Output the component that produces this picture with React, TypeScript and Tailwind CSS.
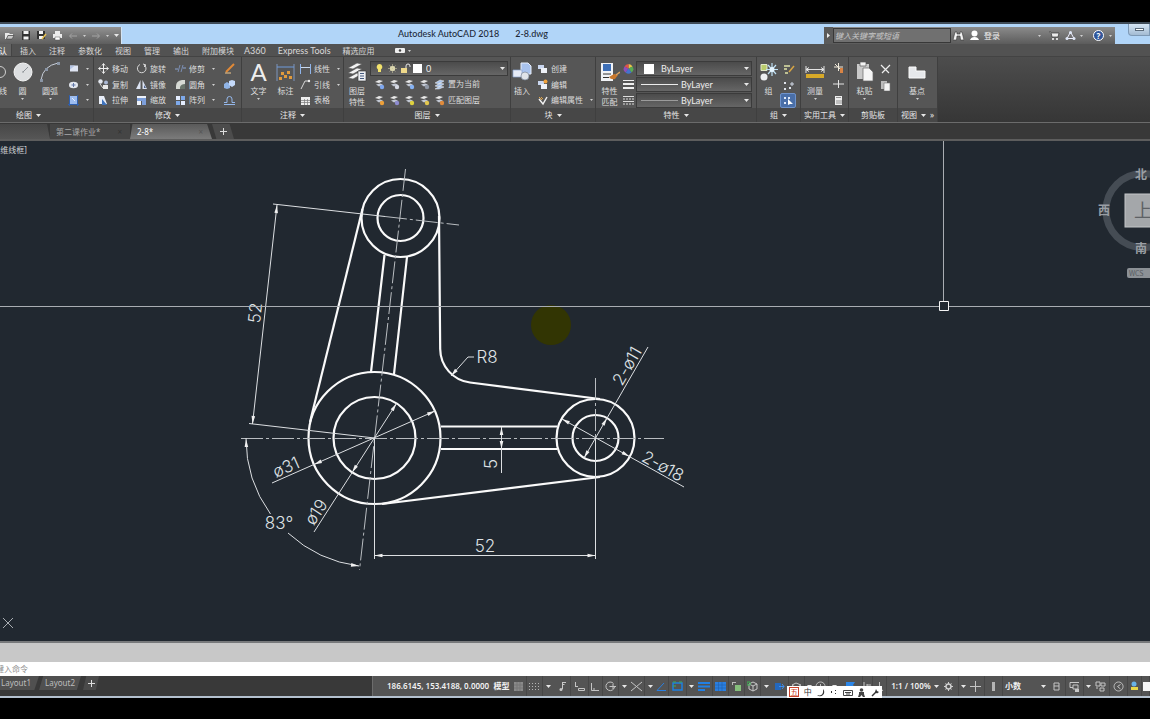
import React from 'react';
import clsx from 'clsx';

type Kids = { children?: React.ReactNode };

function Ico({ w = 11, h = 11, children }: Kids & { w?: number; h?: number }) {
  return (
    <svg width={w} height={h} viewBox={`0 0 ${w} ${h}`} fill="none" className="shrink-0" aria-hidden="true">
      {children}
    </svg>
  );
}

const Caret = () => (
  <Ico w={5} h={3}>
    <path d="M0 0h5L2.5 3z" fill="#e8e8e8" />
  </Ico>
);

const SmallCaret = () => (
  <Ico w={3} h={2}>
    <path d="M0 0h3L1.5 2z" fill="#d0d0d0" />
  </Ico>
);

// ---------- ribbon building blocks ----------

function Panel({ title, width, caret = true, extra, children }: Kids & {
  title: string;
  width: string;
  caret?: boolean;
  extra?: React.ReactNode;
}) {
  return (
    <section className={clsx('flex shrink-0 flex-col border-r border-[#3f3f3f] bg-[#565656]', width)}>
      <div className="flex h-[51px] pt-1">{children}</div>
      <div className="flex h-[14px] items-center justify-center gap-1 bg-[#474747] text-[#e6e6e6]">
        <span className="whitespace-nowrap">{title}</span>
        {caret && <Caret />}
        {extra}
      </div>
    </section>
  );
}

function Big({ icon, label, width, caret = false }: {
  icon: React.ReactNode;
  label: string;
  width: string;
  caret?: boolean;
}) {
  return (
    <button className={clsx('flex shrink-0 flex-col items-center leading-[11px]', width)}>
      <span className="flex h-[24px] items-start justify-center pt-px">{icon}</span>
      {label.split(' ').map((l) => (
        <span key={l} className="whitespace-nowrap">{l}</span>
      ))}
      {caret && <span className="pt-[2px]"><SmallCaret /></span>}
    </button>
  );
}

function Small({ icon, label, title, caret }: {
  icon: React.ReactNode;
  label?: string;
  title?: string;
  caret?: boolean;
}) {
  return (
    <button className="flex h-4 items-center gap-[3px] whitespace-nowrap" aria-label={title}>
      {icon}
      {label}
      {caret && <span className="ml-1"><SmallCaret /></span>}
    </button>
  );
}

const Col = ({ width, children }: Kids & { width: string }) => (
  <div className={clsx('flex shrink-0 flex-col', width)}>{children}</div>
);

// ---------- icons ----------

const RectIco = () => <Ico><path d="M2 2.500h8v6H2z" fill="#dfe5f3" /><path d="M2 2.500h5l-5 4z" fill="#b3c3e2" /></Ico>;
const EllipseIco = () => <Ico><ellipse cx="5.500" cy="6" rx="4.500" ry="3.200" fill="#e4e8f0" /><path d="M5.500 4v4M3.500 6h4" stroke="#6279a8" /></Ico>;
const HatchIco = () => <Ico><path d="M2 1h7v8H2z" fill="#9cbcf0" /><path d="M1.500 0v11M0 9.500h11M9.500 0v11" stroke="#2f5fae" /><path d="M4 3l3 3" stroke="#e6efff" /></Ico>;
const MoveIco = () => <Ico><path d="M5.500 1v9M1 5.500h9M4 2.500l1.500-2 1.500 2M4 8.500l1.500 2 1.500-2M2.500 4l-2 1.500 2 1.500M8.500 4l2 1.500-2 1.500" stroke="#eee" /></Ico>;
const CopyIco = () => <Ico><circle cx="2.500" cy="2.500" r="2.200" fill="#e4e8f0" /><circle cx="8" cy="3.500" r="2" fill="#aab8d4" /><path d="M5 6h5v4H5z" fill="#e8e8e8" /><path d="M2 5l3 4" stroke="#ddd" /></Ico>;
const StretchIco = () => <Ico><path d="M1 1h5l3 8H1z" fill="#e9eef8" /><path d="M4 4l5 6H4z" fill="#3e73bd" /></Ico>;
const RotateIco = () => <Ico><path d="M4 1.500a4.300 4.300 0 1 0 4 .3M7 1l3 1-2 2" stroke="#d7d7d7" /></Ico>;
const MirrorIco = () => <Ico><path d="M4.500 1v9H0zM6.500 1v9H11z" fill="#dbe3f3" /><path d="M8 6l2 3H8z" fill="#4a5f8a" /></Ico>;
const ScaleIco = () => <Ico><path d="M1 1h9v9H6V6H1z" fill="#7d9fdb" /><path d="M1 1h9v2H1zM1 6h4v4H1z" fill="#eef2fa" /></Ico>;
const TrimIco = () => <Ico><path d="M0 6h3M8 5h3" stroke="#8ba3cf" /><path d="M3 9l2-7M6 9l2-7" stroke="#7b8fb5" /></Ico>;
const FilletIco = () => <Ico><path d="M1 10V7q0-5 6-6h3v9z" fill="#d6d9d4" /><path d="M5 10V8q1-3 5-3v5z" fill="#69746b" /></Ico>;
const ArrayIco = () => <Ico><path d="M1 1h4v4H1zM6 6h4v4H6z" fill="#e4edff" /><path d="M6 1h4v4H6zM1 6h4v4H1z" fill="#7ea9ea" /></Ico>;
const PencilIco = () => <Ico><path d="M2 9l8-8" stroke="#e28a37" strokeWidth="2" /><path d="M1 10h6" stroke="#f1c88c" /></Ico>;
const ExplodeIco = () => <Ico><path d="M0 5l3-2 3 2v4l-3 1-3-1z" fill="#90b4e6" /><path d="M5 2l3-1 3 1v4l-3 2-3-2z" fill="#c5dafa" /></Ico>;
const OffsetIco = () => <Ico><path d="M0 9.500h11M0 7.500h3V4a2.500 2.500 0 0 1 5 0v3.500h3" stroke="#94b7ea" /></Ico>;
const LinearIco = () => <Ico><path d="M.5 1v10M10.500 1v10" stroke="#8fb4ea" /><path d="M1 4.500h9" stroke="#c9d9ee" /></Ico>;
const LeaderIco = () => <Ico><path d="M1 10l4-8h4" stroke="#d8d8d8" /><circle cx="9" cy="2" r="1.200" fill="#eee" /></Ico>;
const TableIco = () => <Ico><path d="M1 2h9v8H1z" fill="#eee" /><path d="M1 5.500h9M1 7.500h9M4.500 4v6M7.500 4v6" stroke="#7a7a7a" strokeWidth=".7" /></Ico>;

const LayerIco = ({ dot }: { dot: string }) => (
  <Ico>
    <path d="M1 3l4-2 4 1-4 2z" fill="#e8e8e8" />
    <path d="M2 5.500l4-1 3 1-4 2z" fill="#c2c8d4" />
    <circle cx="8" cy="8" r="2.200" fill={dot} />
  </Ico>
);

const StackIco = () => (
  <Ico>
    <path d="M1 4l5-3 4 1-5 3zM1 7l5-3 4 1-5 3zM1 10l5-3 4 1-5 2z" fill="#a8c3ea" stroke="#f0f0f0" strokeWidth=".5" />
  </Ico>
);

const BlockIco = ({ spark }: { spark?: boolean }) => (
  <Ico>
    <path d="M1 2h6v4H1z" fill="#c9d6ef" />
    <path d="M4 5h6v5H4z" fill="#eef1f7" />
    {spark && <circle cx="8.500" cy="2.500" r="2" fill="#f0a23c" />}
  </Ico>
);

const WheelIco = () => (
  <Ico>
    <path d="M5.500 5.500V1a4.500 4.500 0 0 1 4 2.500z" fill="#e8c648" />
    <path d="M5.500 5.500l4-2a4.500 4.500 0 0 1-1 6z" fill="#58a955" />
    <path d="M5.500 5.500l3 4a4.500 4.500 0 0 1-6 0z" fill="#4373cf" />
    <path d="M5.500 5.500l-3 4a4.500 4.500 0 0 1-1-6z" fill="#8d50b8" />
    <path d="M5.500 5.500l-4-2a4.500 4.500 0 0 1 4-2.500z" fill="#e0524a" />
  </Ico>
);

const WeightIco = () => <Ico><path d="M0 1.500h11" stroke="#eee" /><path d="M0 5h11" stroke="#eee" strokeWidth="2" /><path d="M0 9h11" stroke="#eee" strokeWidth="2" /></Ico>;
const LtypeIco = () => <Ico><path d="M0 1.500h11M0 6.500h11" stroke="#ddd" /><path d="M0 4h11M0 9h11" stroke="#ddd" strokeDasharray="2 1" /></Ico>;

// ---------- title bar ----------

function TitleBar() {
  return (
    <header className="flex h-[22px] shrink-0 items-end border-t-2 border-[#3f4b57] bg-[#b1d5f8]">
      <div className="flex h-[17px] w-[122px] items-center overflow-hidden border-r border-[#d4e5f5] bg-gradient-to-b from-[#929292] to-[#5e5e5e] pl-[4px]">
        <div className="flex items-center gap-[5px]">
          <button aria-label="打开"><Ico><path d="M1 3h4l1 1h3v1H4L2 9H1z" fill="#e9e9e9" /><path d="M4 5.500h6L8 9H2.500z" fill="#c8c8c8" stroke="#333" strokeWidth=".5" /></Ico></button>
          <button aria-label="保存"><Ico><path d="M2 1h8v9H2z" fill="#333" /><path d="M3.500 1h5v3h-5zM3.500 6.500h5v3h-5z" fill="#f3f3f3" /></Ico></button>
          <button aria-label="另存为"><Ico><path d="M1 1h8v8H1z" fill="#333" /><path d="M3 1h4v3H3zM3 6h4v3H3z" fill="#f3f3f3" /><path d="M6 9l4-5" stroke="#e8c14f" strokeWidth="1.500" /></Ico></button>
          <button aria-label="打印"><Ico><path d="M3 1h5v3H3zM1 4h9v4H1z" fill="#ececec" /><path d="M3 7h5v3H3z" fill="#fff" stroke="#555" strokeWidth=".5" /></Ico></button>
          <button aria-label="放弃"><Ico w={10}><path d="M9 6H2M4 3.500L1.500 6 4 8.500" stroke="#a4a4a4" /></Ico></button>
          <SmallCaret />
          <button aria-label="重做"><Ico w={10}><path d="M1 6h7M6 3.500L8.500 6 6 8.500" stroke="#a4a4a4" /></Ico></button>
          <SmallCaret />
          <Caret />
        </div>
      </div>
      <h1 className="flex h-[20px] flex-1 items-center justify-center gap-4 font-[Lato] text-[9px] font-medium text-[#1d2a38]">
        <span>Autodesk AutoCAD 2018</span>
        <span>2-8.dwg</span>
      </h1>
      <div className="flex h-[17px] shrink-0 items-center bg-gradient-to-b from-[#8b8b8b] to-[#5c5c5c] text-[#f0f0f0]">
        <button className="flex h-full w-[9px] items-center justify-center bg-[#5b5b5b]" aria-label="展开">
          <Ico w={3} h={5}><path d="M0 0v5l3-2.500z" fill="#eee" /></Ico>
        </button>
        <input
          aria-label="搜索"
          placeholder="键入关键字或短语"
          className="h-[15px] w-[118px] border border-[#383838] bg-[#707070] px-px text-[8px] italic placeholder:text-[#c6c6c6]"
        />
        <div className="flex h-full w-[164px] items-center pl-[2px]">
          <button aria-label="搜索信息"><Ico><path d="M2 2h2v2h3V2h2l2 8H7.500L7 6H4l-.5 4H0z" fill="#f2f2f2" stroke="#333" strokeWidth=".6" /></Ico></button>
          <button className="ml-[5px] flex items-center gap-1">
            <Ico><circle cx="5.500" cy="3.500" r="3" fill="#fff" /><path d="M1 10q1-3 4.500-3t4.500 3z" fill="#fff" /></Ico>
            登录
          </button>
          <span className="ml-[38px]"><SmallCaret /></span>
          <button className="ml-2" aria-label="购物车"><Ico><path d="M0 2h2l1 5h6l1-4H3" fill="#ececec" stroke="#333" strokeWidth=".7" /><circle cx="4" cy="9" r="1" fill="#fff" /><circle cx="8" cy="9" r="1" fill="#fff" /></Ico></button>
          <button className="ml-[5px]" aria-label="A360"><Ico><path d="M5.500 2L9 8.500H2z" stroke="#eef" /><circle cx="5.500" cy="2.500" r="1.500" fill="#dfe6f5" /><circle cx="2" cy="8.500" r="1.500" fill="#dfe6f5" /><circle cx="9" cy="8.500" r="1.500" fill="#dfe6f5" /></Ico></button>
          <span className="ml-1"><SmallCaret /></span>
          <button className="ml-[10px] flex size-[11px] items-center justify-center rounded-full border border-white bg-[#31569a] text-[8px] leading-none font-bold text-white">?</button>
          <span className="ml-[5px]"><SmallCaret /></span>
        </div>
      </div>
      <div className="flex h-[20px] w-[35px] items-start justify-end">
        <button aria-label="最小化" className="flex h-[12px] w-[22px] items-center justify-center rounded-bl-sm border border-t-0 border-[#7e99b5] bg-gradient-to-b from-[#d6e6f5] to-[#a3bbd3]">
          <span className="h-[3px] w-[9px] border border-[#5b6b7b] bg-white" />
        </button>
      </div>
    </header>
  );
}

const TABS = ['插入', '注释', '参数化', '视图', '管理', '输出', '附加模块'];

function RibbonTabs() {
  return (
    <nav className="flex h-[13px] shrink-0 items-end border-b border-[#434343] bg-[#525252] leading-[10px] text-[#d8d8d8]">
      <a href="#home" className="flex h-[12px] w-[12px] justify-end overflow-hidden border-r border-[#444] bg-[#636363] pt-[2px] pr-1 whitespace-nowrap text-white">默认</a>
      <div className="flex gap-[13px] pl-2">
        {TABS.map((t) => (
          <a key={t} href={`#${t}`}>{t}</a>
        ))}
      </div>
      <div className="flex gap-3 pl-[10px] font-[Lato] text-[9px]">
        <a href="#a360">A360</a>
        <a href="#express">Express Tools</a>
      </div>
      <a href="#featured" className="pl-3">精选应用</a>
      <button className="ml-5 flex h-[11px] items-center gap-[3px]" aria-label="最小化功能区">
        <Ico w={10} h={7}><rect y="1" width="10" height="5" rx="1" fill="#eee" /><circle cx="5" cy="3.500" r="1.200" fill="#444" /></Ico>
        <SmallCaret />
      </button>
    </nav>
  );
}

// ---------- ribbon ----------

const comboBox = 'flex items-center border border-[#3b3b3b] bg-gradient-to-b from-[#4b4b4b] to-[#666] pr-[2px]';
const comboSelect = 'min-w-0 flex-1 appearance-none bg-transparent font-[Lato] text-[9px] leading-[12px] text-[#ededed] outline-none';

function Ribbon() {
  return (
    <div className="flex h-[66px] shrink-0 border-b border-[#6b6b6b] bg-gradient-to-b from-[#4d4d4d] to-[#363636] text-[#dedede]">
      <Panel title="绘图" width="w-[94px]" extra={<span className="w-8" />}>
        <div className="flex w-[8px] justify-end overflow-hidden">
          <Big width="w-[18px]" label="直线" icon={<Ico w={16} h={20}><circle cx="9" cy="10" r="5.500" stroke="#cfcfcf" /></Ico>} />
        </div>
        <Big width="w-[29px]" label="圆" caret icon={<Ico w={20} h={20}><circle cx="10" cy="10" r="9" fill="#dcdee0" stroke="#f5f5f5" /><path d="M10 10l5-5M9 10h2" stroke="#8e9398" /></Ico>} />
        <Big width="w-[26px]" label="圆弧" caret icon={<Ico w={20} h={20}><path d="M1 18Q3 4 18 1" stroke="#c6cdd8" /><path d="M0 17h3v3H0zM5 6h3v3H5zM17 0h3v3h-3z" fill="#8a95a5" /></Ico>} />
        <div className="flex flex-col pl-[5px]">
          <Small title="矩形" icon={<RectIco />} caret />
          <Small title="椭圆" icon={<EllipseIco />} caret />
          <Small title="图案填充" icon={<HatchIco />} caret />
        </div>
      </Panel>

      <Panel title="修改" width="w-[148px]">
        <Col width="w-[38px] pl-1">
          <Small icon={<MoveIco />} label="移动" />
          <Small icon={<CopyIco />} label="复制" />
          <Small icon={<StretchIco />} label="拉伸" />
        </Col>
        <Col width="w-[39px] pl-1">
          <Small icon={<RotateIco />} label="旋转" />
          <Small icon={<MirrorIco />} label="镜像" />
          <Small icon={<ScaleIco />} label="缩放" />
        </Col>
        <Col width="w-[49px] pl-1">
          <Small icon={<TrimIco />} label="修剪" caret />
          <Small icon={<FilletIco />} label="圆角" caret />
          <Small icon={<ArrayIco />} label="阵列" caret />
        </Col>
        <Col width="w-[16px] pl-1">
          <Small title="删除" icon={<PencilIco />} />
          <Small title="分解" icon={<ExplodeIco />} />
          <Small title="偏移" icon={<OffsetIco />} />
        </Col>
      </Panel>

      <Panel title="注释" width="w-[102px]">
        <Big width="w-[33px]" label="文字" caret icon={<span className="font-[Lato] text-[24px] leading-[20px] text-[#eee]">A</span>} />
        <Big
          width="w-[21px]"
          label="标注"
          icon={
            <Ico w={19} h={20}>
              <path d="M1 2v17M18 2v17" stroke="#7d95bd" />
              <path d="M1 5h17" stroke="#6f9bdc" />
              <path d="M5 10h3v3H5zM11 9h3v3h-3zM8 13h3v3H8zM13 14h3v3h-3zM3 15h3v3H3z" fill="#e09a3c" />
            </Ico>
          }
        />
        <Col width="w-[44px] pl-1">
          <Small icon={<LinearIco />} label="线性" caret />
          <Small icon={<LeaderIco />} label="引线" caret />
          <Small icon={<TableIco />} label="表格" />
        </Col>
      </Panel>

      <Panel title="图层" width="w-[167px]">
        <Big
          width="w-[26px]"
          label="图层 特性"
          icon={
            <Ico w={20} h={20}>
              <path d="M1 6l9-5 5 1-9 5zM1 11l9-5 5 1-9 5zM1 16l9-5 5 1-9 5z" fill="#f2f2f2" stroke="#555" strokeWidth=".6" />
              <path d="M11 9h8v10h-8z" fill="#eceef2" stroke="#333" strokeWidth=".6" />
              <path d="M13 11.500h4M13 14h4M13 16.500h4" stroke="#43597e" />
            </Ico>
          }
        />
        <div className="flex flex-1 flex-col pr-[2px]">
          <div className={clsx(comboBox, 'h-[15px] gap-[2px] pl-[3px]')}>
            <Ico><path d="M5.500 1a3 3 0 0 1 1.500 5.500V9H4V6.500A3 3 0 0 1 5.500 1z" fill="#f2e26c" /></Ico>
            <Ico><circle cx="5.500" cy="5.500" r="2.500" fill="#f5f0c2" /><path d="M5.500 1v9M1 5.500h9M2.500 2.500l6 6M8.500 2.500l-6 6" stroke="#c9c5a0" strokeWidth=".6" /></Ico>
            <Ico><path d="M1 5h6v5H1z" fill="#efd98a" /><path d="M6 5V3a2 2 0 0 1 4 0v1" stroke="#e8e8e8" /></Ico>
            <span className="size-[9px] bg-white" />
            <select aria-label="图层" className={clsx(comboSelect, 'pl-[2px]')}><option>0</option></select>
            <Caret />
          </div>
          <div className="flex h-4 items-center gap-[4px] pl-[4px]">
            <Small title="关" icon={<LayerIco dot="#7fa8f0" />} />
            <Small title="隔离" icon={<LayerIco dot="#d5d9e4" />} />
            <Small title="冻结" icon={<LayerIco dot="#86b3f5" />} />
            <Small title="锁定" icon={<LayerIco dot="#8f97a5" />} />
            <Small icon={<StackIco />} label="置为当前" />
          </div>
          <div className="flex h-4 items-center gap-[4px] pl-[4px]">
            <Small title="打开所有图层" icon={<LayerIco dot="#eda03a" />} />
            <Small title="取消隔离" icon={<LayerIco dot="#8d8cd0" />} />
            <Small title="解冻" icon={<LayerIco dot="#ded13f" />} />
            <Small title="解锁" icon={<LayerIco dot="#e2c64e" />} />
            <Small icon={<LayerIco dot="#e08b3c" />} label="匹配图层" />
          </div>
        </div>
      </Panel>

      <Panel title="块" width="w-[85px]">
        <Big
          width="w-[22px]"
          label="插入"
          icon={
            <Ico w={20} h={20}>
              <path d="M9 1h7l3 3v8H9z" fill="#a9c3ee" stroke="#e9f0fc" />
              <path d="M1 8h9v7H1z" fill="#e6ebf6" stroke="#8aa3cf" strokeWidth=".7" />
              <circle cx="13" cy="14" r="4" fill="#dfe3e8" stroke="#7a8799" strokeWidth=".7" />
            </Ico>
          }
        />
        <Col width="w-[62px] pl-1">
          <Small icon={<BlockIco />} label="创建" />
          <Small icon={<BlockIco spark />} label="编辑" />
          <Small icon={<Ico><path d="M2 2l3 3M4 2l2 2" stroke="#e2a64a" /><path d="M2 4l4 5 4-7" stroke="#f0f0f0" strokeWidth="1.500" /></Ico>} label="编辑属性" caret />
        </Col>
      </Panel>

      <Panel title="特性" width="w-[161px]">
        <Big
          width="w-[27px]"
          label="特性 匹配"
          icon={
            <Ico w={20} h={20}>
              <path d="M1 1h12v18H1z" fill="#f1f3f7" />
              <path d="M3 2h8v7H3z" fill="#3f70b8" />
              <path d="M3 12h8M3 15.500h6" stroke="#333" />
              <path d="M9 15l5-3 4 1-3 4q-4 1-6-2z" fill="#c9772b" />
              <path d="M16 13l4-3" stroke="#dca15e" strokeWidth="1.500" />
            </Ico>
          }
        />
        <Col width="w-[13px]">
          <Small title="对象颜色" icon={<WheelIco />} />
          <Small title="线宽" icon={<WeightIco />} />
          <Small title="线型" icon={<LtypeIco />} />
        </Col>
        <div className="flex flex-1 flex-col gap-px pr-1">
          <div className={clsx(comboBox, 'h-[15px] pl-[7px]')}>
            <span className="mr-[7px] size-[10px] bg-white" />
            <select aria-label="颜色" className={comboSelect}><option>ByLayer</option></select>
            <Caret />
          </div>
          <div className={clsx(comboBox, 'h-[15px] pl-1')}>
            <span className="mr-[3px] h-px w-[37px] bg-[#ececec]" />
            <select aria-label="线宽" className={comboSelect}><option>ByLayer</option></select>
            <Caret />
          </div>
          <div className={clsx(comboBox, 'h-[15px] pl-1')}>
            <span className="mr-[3px] h-px w-[37px] bg-[#9b9b9b]" />
            <select aria-label="线型" className={comboSelect}><option>ByLayer</option></select>
            <Caret />
          </div>
        </div>
      </Panel>

      <Panel title="组" width="w-[44px]">
        <Big
          width="w-[23px]"
          label="组"
          icon={
            <Ico w={20} h={20}>
              <path d="M2 2.500h6v6H2z" fill="#b9cc6c" stroke="#e2e8c8" />
              <circle cx="5" cy="15" r="3.500" fill="#eef0f2" />
              <path d="M13 1v13M7 7.500h12M9 3l8 9M17 3l-8 9" stroke="#bfe1f7" strokeWidth="1.200" />
              <circle cx="13" cy="7.500" r="2.500" fill="#e6f5ff" />
            </Ico>
          }
        />
        <Col width="w-[18px]">
          <Small title="解除编组" icon={<Ico w={16}><path d="M4 2h6M4 5h3M5 9h3" stroke="#dfe3a8" strokeWidth="1.500" /><path d="M9 8l5-6" stroke="#d7a545" strokeWidth="1.500" /></Ico>} />
          <Small title="组编辑" icon={<Ico w={16}><path d="M4 2h2v2H4zM4 8h2v2H4zM9 7h2v2H9z" fill="#dfe3ea" /><path d="M12 2v4M10 4h4" stroke="#d0d8e6" /></Ico>} />
          <button aria-label="启用组选择" className="flex h-[15px] w-[16px] items-center justify-center rounded-xs border border-[#6f93cb] bg-[#4a6fa8]">
            <Ico><path d="M1 2h2v2H1zM5 2h2v2H5zM1 7h2v2H1z" fill="#dfe9fa" /><path d="M5 4l5 5H7l-2 1z" fill="#fff" /></Ico>
          </button>
        </Col>
      </Panel>

      <Panel title="实用工具" width="w-[48px]">
        <Big
          width="w-[28px]"
          label="测量"
          caret
          icon={
            <Ico w={20} h={20}>
              <path d="M1 4v7M19 4v7M1 7.500h18M4 5.500l-3 2 3 2M16 5.500l3 2-3 2" stroke="#e4e4e4" />
              <path d="M1 12h18v4H1z" fill="#d7a928" />
            </Ico>
          }
        />
        <Col width="w-[14px] pl-1">
          <Small title="快速选择" icon={<Ico><path d="M5.500 0v8M1 4h9M2 1l6 6" stroke="#f0e9da" /><path d="M7 5h3v5H7z" fill="#d98445" /></Ico>} />
          <Small title="点样式" icon={<Ico><path d="M5.500 1v8M0 5h11" stroke="#e5e5e5" /></Ico>} />
          <Small title="计算器" icon={<Ico><path d="M2 1h7v9H2z" fill="#eee" /><path d="M3 2.500h5M4 5v4M6 5v4M8 5v4" stroke="#777" strokeWidth=".8" /></Ico>} />
        </Col>
      </Panel>

      <Panel title="剪贴板" width="w-[49px]" caret={false}>
        <Big
          width="w-[31px]"
          label="粘贴"
          caret
          icon={
            <Ico w={18} h={20}>
              <path d="M1 2h12v15H1z" fill="#c9c9c9" />
              <path d="M4 0h6v4H4z" fill="#f4f4f4" stroke="#555" strokeWidth=".7" />
              <path d="M7 6h6l4 4v9H7z" fill="#f5f5f5" stroke="#666" strokeWidth=".7" />
            </Ico>
          }
        />
        <Col width="w-[14px]">
          <Small title="剪切" icon={<Ico><path d="M1 1l8 8M10 1L2 9" stroke="#eee" strokeWidth="1.200" /></Ico>} />
          <Small title="复制剪裁" icon={<Ico><path d="M1 1h6v8H1z" fill="#bcbcbc" /><path d="M4 3h6v8H4z" fill="#f4f4f4" stroke="#777" strokeWidth=".6" /></Ico>} />
        </Col>
      </Panel>

      <Panel title="视图" width="w-[40px]" extra={<span className="text-[8px]">»</span>}>
        <Big width="w-[38px]" label="基点" caret icon={<Ico w={18} h={20}><path d="M1 5h7v4h9v7H1z" fill="#e6e8eb" stroke="#fafafa" /></Ico>} />
      </Panel>
    </div>
  );
}

function FileTabs() {
  return (
    <div className="flex h-[18px] shrink-0 items-end border-b-2 border-[#5d5d5d] bg-[#383838] text-[#a9a9a9]">
      <button aria-label="开始" className="h-[15px] w-[50px] bg-gradient-to-b from-[#474747] to-[#565656] [clip-path:polygon(0_0,94%_0,100%_100%,0_100%)]" />
      <button className="flex h-[15px] w-[80px] items-center justify-between bg-[#454545] pr-2 pl-[6px]">
        第二课作业*
        <span className="text-[#333]">×</span>
      </button>
      <button className="flex h-[15px] w-[82px] items-center justify-between bg-gradient-to-b from-[#5a5a5a] to-[#7b7b7b] pr-[9px] pl-[7px] text-white [clip-path:polygon(3%_0,94%_0,100%_100%,0_100%)]">
        2-8*
        <span className="text-[#555]">×</span>
      </button>
      <button aria-label="新图形" className="flex h-[15px] w-[22px] items-center justify-center bg-[#4c4c4c] [clip-path:polygon(0_0,80%_0,100%_100%,20%_100%)]">
        <Ico w={7} h={7}><path d="M3.500 0v7M0 3.500h7" stroke="#ddd" /></Ico>
      </button>
    </div>
  );
}

// ---------- drawing ----------

// arrow head with its tip at x,y, pointing along `a` degrees
function Arrow({ x, y, a }: { x: number; y: number; a: number }) {
  return <path d="M0 0L-8 1.800V-1.800z" fill="#f0f0f0" stroke="none" transform={`translate(${x} ${y}) rotate(${a})`} />;
}

function Label({ x, y, a = 0, children }: Kids & { x: number; y: number; a?: number }) {
  return (
    <text
      x={x}
      y={y}
      dy="6"
      textAnchor="middle"
      transform={`rotate(${a} ${x} ${y})`}
      className="fill-[#dfe2e5] stroke-none font-[Inter] text-[17px] font-light"
    >
      {children}
    </text>
  );
}

function Drawing() {
  return (
    <svg width="1150" height="500" viewBox="0 141 1150 500" fill="none" className="shrink-0 overflow-visible" role="img" aria-label="2-8">
      <circle cx="551" cy="325" r="20" fill="#323503" />

      {/* outline */}
      <g stroke="#fafafa" strokeWidth="2.200">
        <circle cx="374.500" cy="438" r="66" />
        <circle cx="374.500" cy="438" r="41" />
        <circle cx="400.500" cy="218" r="39" />
        <circle cx="400.500" cy="218" r="23" />
        <circle cx="595.500" cy="438" r="39" />
        <circle cx="595.500" cy="438" r="23" />
        <path d="M362.500 209L310 422" />
        <path d="M439 216L440.200 349A34 34 0 0 0 470 382.500L600 399" />
        <path d="M382 504L600 477" />
        <path d="M384.500 255L371 372M407 257L394 374" />
        <path d="M441 426.500H557.500M441 449H557.500" />
      </g>

      {/* centre lines */}
      <g stroke="#b9bdc1">
        <path d="M241 438.500H664" strokeDasharray="22 3 3 3" />
        <path d="M405.500 169L359.500 570" strokeDasharray="22 3 3 3" />
        <path d="M385 216.500L459 225" strokeDasharray="22 3 3 3" />
        <path d="M595.500 378V438" strokeDasharray="22 3 3 3" />
      </g>

      {/* dimensions */}
      <g stroke="#dcdfe2">
        <path d="M273 204L385 216.500M249 423.500L374.500 438M277 205L252.500 424" />
        <path d="M374.500 438V559M595.500 438V559M374.500 555.500H595.500" />
        <path d="M501.500 427V473" />
        <path d="M272 483L435 411" />
        <path d="M314 532L396.500 403.500" />
        <path d="M451 376L468 357H474" />
        <path d="M584 458L648 347" />
        <path d="M562 419L684 487" />
        <path d="M246 438A128.500 128.500 0 0 0 270.500 514M288 533A128.500 128.500 0 0 0 359 566" />
      </g>
      <Arrow x={277} y={205} a={-84} />
      <Arrow x={252.5} y={424} a={96} />
      <Arrow x={374.5} y={555.5} a={180} />
      <Arrow x={595.5} y={555.5} a={0} />
      <Arrow x={501.5} y={427} a={-90} />
      <Arrow x={501.5} y={449} a={90} />
      <Arrow x={435} y={411} a={-24} />
      <Arrow x={314} y={464.5} a={156} />
      <Arrow x={396.5} y={403.5} a={-57} />
      <Arrow x={352} y={472.5} a={123} />
      <Arrow x={451} y={376} a={132} />
      <Arrow x={607} y={418} a={-60} />
      <Arrow x={584} y={458} a={120} />
      <Arrow x={562} y={419} a={209} />
      <Arrow x={629.5} y={456.5} a={29} />
      <Arrow x={246} y={439} a={-93} />
      <Arrow x={359} y={566} a={8} />

      <Label x={255} y={313} a={-84}>52</Label>
      <Label x={485} y={546}>52</Label>
      <Label x={491} y={464} a={-90}>5</Label>
      <Label x={286} y={467} a={-24}>ø31</Label>
      <Label x={316} y={512} a={-57}>ø19</Label>
      <Label x={279} y={523}>83°</Label>
      <Label x={487} y={357}>R8</Label>
      <Label x={627} y={366} a={-60}>2-ø11</Label>
      <Label x={663} y={466} a={29}>2-ø18</Label>

      {/* crosshair */}
      <g stroke="#a9adb2">
        <path d="M0 306.500H939M948 306.500H3000M943.500 141V302" />
        <path d="M939.500 301.500h9v9h-9z" stroke="#f4f4f4" />
      </g>

      {/* UCS axis label */}
      <path d="M3 618l10 10M13 618L3 628" stroke="#a9adb2" />

      {/* view cube */}
      <circle cx="1143" cy="210.500" r="37" stroke="#454c54" strokeWidth="7" />
      <rect x="1125" y="194" width="36" height="33" fill="#a4a7aa" stroke="#c3c5c7" />
      <rect x="1127" y="268" width="36" height="10" rx="2" fill="#8c9196" />
      <g className="fill-[#9a9fa5] font-['Noto_Sans_CJK_SC'] text-[12px] font-bold">
        <text x="1135" y="179">北</text>
        <text x="1098" y="215">西</text>
        <text x="1135" y="253">南</text>
        <text x="1134" y="217" className="fill-[#5d6165] text-[18px] font-normal">上</text>
        <text x="1129" y="276" className="fill-[#575c61] text-[7px] font-normal">WCS</text>
      </g>
    </svg>
  );
}

// ---------- status bar ----------

type Cell = { w: string; title?: string; on?: boolean; d?: string; icon?: React.ReactNode };

const caret = (w: string): Cell => ({ w, icon: <Caret /> });

const CELLS_LEFT: Cell[] = [
  { w: 'w-4', title: '图形栅格', icon: <Ico><path d="M1 1h9v9H1z" fill="#8a8a8a" /><path d="M4 1v9M7 1v9M1 4h9M1 7h9" stroke="#777" /></Ico> },
  { w: 'w-4', title: '捕捉模式', icon: <Ico><path d="M0 2.500h11M0 5.500h11M0 8.500h11" stroke="#b5b5b5" strokeDasharray="1 2" /></Ico> },
  caret('w-[10px]'),
  { w: 'w-[18px]', title: '推断约束', icon: <Ico><path d="M6.500 1v7M6 1.500h4M8.500 3.500H6" stroke="#c9c9c9" /><circle cx="5" cy="8.500" r="1.500" fill="#c9c9c9" /></Ico> },
  { w: 'w-[18px]', title: '动态输入', d: 'M1.500 1v5M1 5.500h3M4.500 7.500h6v2h-6z' },
  { w: 'w-[14px]', title: '正交模式', d: 'M1.500 2v7.500H9M4 9V7' },
  { w: 'w-4', title: '极轴追踪', d: 'M8.500 2.500A4.300 4.300 0 1 0 9.500 6M4.500 5.500H11M8 3v5' },
  caret('w-[10px]'),
  { w: 'w-4', title: '等轴测草图', d: 'M0 1l11 9M11 1L0 10' },
  caret('w-[10px]'),
  { w: 'w-[14px]', title: '对象捕捉追踪', on: true, d: 'M1 9.500L8 2M1 9.500h9' },
  { w: 'w-[18px]', title: '对象捕捉', icon: <Ico><path d="M1 2h9v7H1z" stroke="#1e7fe0" strokeWidth="1.500" /><path d="M1 1h3M7 1h3M1 5h3" stroke="#38b05c" /></Ico> },
  caret('w-[8px]'),
  { w: 'w-[18px]', title: '线宽', icon: <Ico w={12}><path d="M0 2h12M0 5.500h12M0 9h7" stroke="#2180e6" strokeWidth="2" /></Ico> },
  { w: 'w-4', title: '透明度', icon: <Ico><path d="M0 1h11v9H0z" fill="#2b7fe0" /><path d="M0 4h11M0 7h11M3.500 1v9M7 1v9" stroke="#1d5fae" strokeWidth=".6" /></Ico> },
  { w: 'w-4', title: '选择循环', icon: <Ico><path d="M1 1.500h4M1.500 1v3" stroke="#bbb" /><path d="M4 4h6v6H4z" fill="#86bf7c" /></Ico> },
  { w: 'w-4', title: '三维对象捕捉', icon: <Ico><path d="M2 3l4-2 4 2v5l-4 2-4-2zM2 3l4 2 4-2M6 5v5" stroke="#c8c8c8" /><path d="M0 1h3v3H0z" stroke="#3fae52" /></Ico> },
  caret('w-[10px]'),
  { w: 'w-[18px]', title: '动态 UCS', icon: <Ico><path d="M1 2h6v7H1z" fill="#2468bd" /><path d="M5 5.500h5M8 3l2 2.500L8 8" stroke="#3f8ff0" /></Ico> },
  { w: 'w-4', title: '选择过滤', d: 'M1 4l4-2 5 2M1 4l4 3 5-3' },
  caret('w-[8px]'),
  { w: 'w-4', title: '小控件', d: 'M5.500 1a4.500 4.500 0 1 0 .1 0M5.500 3v5' },
  caret('w-[10px]'),
  { w: 'w-[24px]', title: '注释可见性', icon: <Ico><path d="M1 1h9l-2 3 2 3H1z" fill="#2b86e8" /></Ico> },
  { w: 'w-[10px]', title: '自动缩放', d: 'M2 1v9M5 3v7M5 4h4' },
  { w: 'w-[14px]', title: '注释比例', d: 'M5.500 1v5L2 10M5.500 6L9 10' },
];

const CELLS_MID: Cell[] = [
  { w: 'w-[20px]', title: '切换工作空间', icon: <Ico><path d="M5.500 1v9M1 5.500h9M2.500 2.500l6 6M8.500 2.500l-6 6" stroke="#d0d0d0" /><circle cx="5.500" cy="5.500" r="2.500" fill="#545454" stroke="#d0d0d0" strokeWidth="1.500" /></Ico> },
  caret('w-[8px]'),
  { w: 'w-[18px]', title: '注释监视器', d: 'M5.500 0v11M0 5.500h11' },
  { w: 'w-[18px]', title: '单位', icon: <Ico><path d="M4 1h3v9H4z" fill="#b5b5b5" /></Ico> },
];

const CELLS_RIGHT: Cell[] = [
  { w: 'w-[18px]', title: '快捷特性', d: 'M3 2h5v7H3zM3 5h5' },
  { w: 'w-[18px]', title: '锁定用户界面', icon: <Ico><path d="M1 1.500h9M1 1.500v5h3M4 4h5v4H4z" stroke="#c8c8c8" /><path d="M6 8h4v3H6z" fill="#c8c8c8" /></Ico> },
  caret('w-[8px]'),
  { w: 'w-[18px]', title: '隔离对象', d: 'M1 1h4v4H1zM6 2h4v3H6zM5 7h4v3H5zM1 7h2' },
  { w: 'w-[18px]', title: '硬件加速', d: 'M5.500 1a4.500 4.500 0 1 0 .1 0M7.500 3.500l-3 2 3 2.500' },
  { w: 'w-[14px]', title: '全屏显示', icon: <Ico><circle cx="5" cy="3" r="2.500" fill="#67b2e8" /><path d="M2 6h7v3H2z" fill="#e6d548" /></Ico> },
  { w: 'w-[8px]', title: '自定义', icon: <Ico w={8}><path d="M1 1h7v9H1z" fill="#f4f4f4" /></Ico> },
];

function Cells({ cells }: { cells: Cell[] }) {
  return cells.map((c, i) => {
    const body = c.icon ?? <Ico><path d={c.d} stroke={c.on ? '#2a7fe0' : '#c4c4c4'} /></Ico>;
    return (
      <button
        key={i}
        aria-label={c.title ?? '更多'}
        className={clsx('flex h-full shrink-0 items-center justify-center', c.w, c.title && 'border-r border-[#474747]')}
      >
        {body}
      </button>
    );
  });
}

function InputMethodBar() {
  return (
    <div className="absolute top-[10px] left-[414px] flex h-[12px] w-[95px] items-center justify-around bg-white text-[8px] leading-none text-[#333]">
      <span className="border border-[#c8442c] text-[#c8442c]">五</span>
      <span>中</span>
      <Ico w={9} h={9}><path d="M7 1a4 4 0 0 1-6 6q7 2 6-6z" fill="#333" /></Ico>
      <Ico w={8} h={8}><path d="M1 3h1v2H1zM5 2h1v1H5zM5 5h1v1H5z" fill="#333" /></Ico>
      <Ico w={10} h={9}><path d="M.5 2.500h9v5h-9zM2 4.500h6M3 6h4" stroke="#444" /></Ico>
      <Ico w={9} h={9}><circle cx="4.500" cy="2" r="1.800" fill="#444" /><path d="M2 4h5v2L8 9H6L4.500 7 3 9H1l1-3z" fill="#444" /></Ico>
      <Ico w={9} h={9}><path d="M1 8l4-4" stroke="#333" strokeWidth="1.500" /><path d="M4 4l1-3 1 2 2 1-2 1.500z" fill="#333" /></Ico>
    </div>
  );
}

function StatusBar() {
  return (
    <footer className="flex h-[22px] shrink-0 border-b-2 border-[#b4c1cf] bg-[#393939] text-[#bdbdbd]">
      <div className="flex h-[14px] flex-1 items-center overflow-hidden text-[8px]">
        <button className="h-full bg-[#505050] pr-2 pl-px [clip-path:polygon(0_0,100%_0,88%_100%,0_100%)]">Layout1</button>
        <button className="h-full bg-[#505050] px-[6px] [clip-path:polygon(10%_0,100%_0,90%_100%,0_100%)]">Layout2</button>
        <button aria-label="新建布局" className="ml-[2px] flex h-full w-[16px] items-center justify-center bg-[#4a4a4a] [clip-path:polygon(20%_0,100%_0,80%_100%,0_100%)]">
          <Ico w={7} h={7}><path d="M3.500 0v7M0 3.500h7" stroke="#ddd" /></Ico>
        </button>
      </div>
      <div className="relative flex w-[778px] shrink-0 items-center border-l border-[#6c6c6c] bg-[#545454] text-[#f2f2f2]">
        <span className="w-[118px] shrink-0 pl-[14px] text-[8px] font-semibold whitespace-nowrap">186.6145, 153.4188, 0.0000</span>
        <button className="w-[20px] shrink-0 pl-px text-[8px] font-bold">模型</button>
        <Cells cells={CELLS_LEFT} />
        <button className="flex w-[52px] shrink-0 items-center justify-center gap-[3px] pl-1 text-[8px] font-semibold whitespace-nowrap">
          1:1 / 100% <Caret />
        </button>
        <Cells cells={CELLS_MID} />
        <button className="flex w-[45px] shrink-0 items-center justify-between px-[2px] text-[8px] font-bold">
          小数 <Caret />
        </button>
        <Cells cells={CELLS_RIGHT} />
        <InputMethodBar />
      </div>
    </footer>
  );
}

export default function App() {
  return (
    <div className="flex h-screen flex-col overflow-hidden bg-black pt-[22px] pb-[21px] font-['Noto_Sans','Noto_Sans_CJK_SC',sans-serif] text-[8px]">
      <TitleBar />
      <RibbonTabs />
      <Ribbon />
      <FileTabs />
      <main className="flex min-h-0 flex-1 flex-col overflow-hidden bg-[#212830]">
        <div className="relative flex min-h-0 flex-1">
          <Drawing />
          <button className="absolute top-[3px] left-0 flex w-[27px] justify-end overflow-hidden whitespace-nowrap text-[#cfd2d5]">[-][俯视][二维线框]</button>
        </div>
      </main>
      <div className="h-[21px] shrink-0 border-t-2 border-[#77797b] bg-[#c8c8c8]" />
      <div className="flex h-[14px] shrink-0 overflow-hidden bg-white">
        <input aria-label="命令行" placeholder="键入命令" className="-ml-1 flex-1 text-[8px] outline-none placeholder:text-[#8d8d8d]" />
      </div>
      <StatusBar />
    </div>
  );
}
